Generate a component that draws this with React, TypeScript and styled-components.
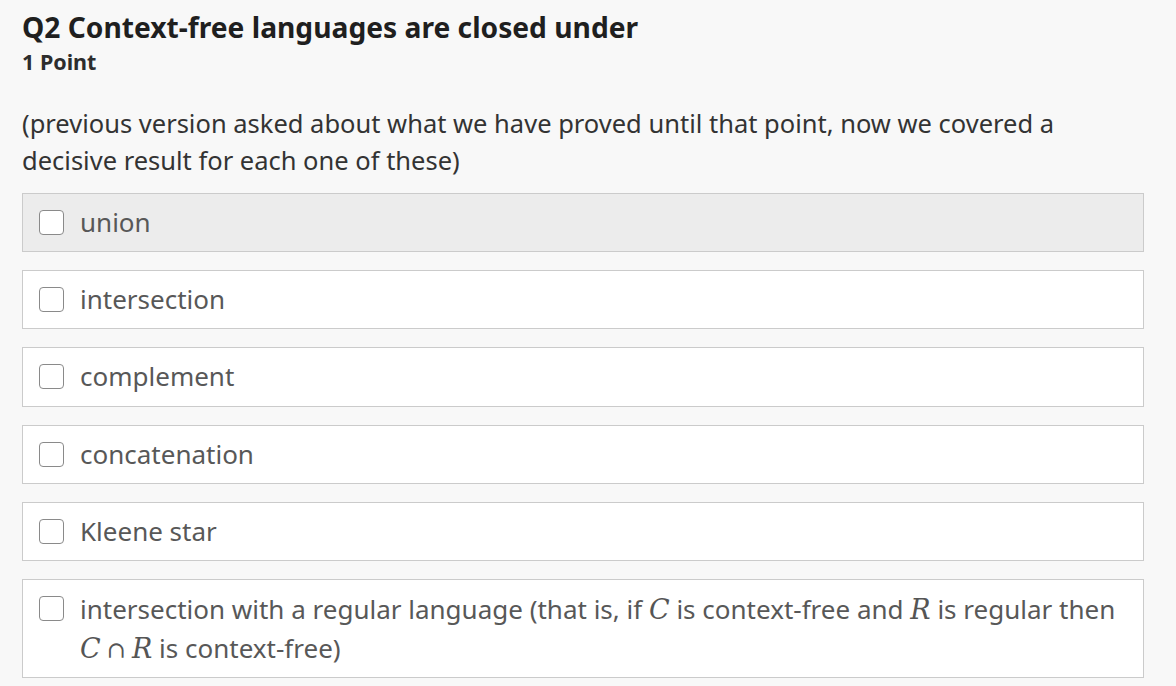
import React from "react";
import styled, { createGlobalStyle } from "styled-components";

const Global = createGlobalStyle`
  html, body { margin: 0; padding: 0; background: #f8f8f8; }
  body { font-family: "Noto Sans", "Open Sans", sans-serif; }
`;

const Page = styled.div`
  padding: 9px 32px 0 22px;
  display: flex;
  flex-direction: column;
`;

const Title = styled.h2`
  margin: 0;
  font-size: 28.2px;
  line-height: 36px;
  font-weight: 700;
  color: #1f1f1f;
`;

const Points = styled.div`
  margin-top: 4px;
  font-size: 21.5px;
  line-height: 26px;
  font-weight: 700;
  color: #2d2d2d;
`;

const Prompt = styled.p`
  margin: 30px 0 0;
  font-size: 25.5px;
  line-height: 37px;
  color: #333;
`;

const Options = styled.div`
  margin-top: 14px;
  display: flex;
  flex-direction: column;
  gap: 18px;
`;

const Option = styled.label<{ $hover?: boolean }>`
  display: flex;
  align-items: flex-start;
  gap: 16px;
  padding: 10px 16px;
  border: 1px solid #cbcbcb;
  background: ${(p) => (p.$hover ? "#ececec" : "#ffffff")};
`;

const Box = styled.span`
  flex: none;
  width: 23px;
  height: 23px;
  margin-top: 6px;
  border: 1px solid #8a8a8a;
  border-radius: 4px;
  background: #fff;
`;

const Label = styled.span<{ $tall?: boolean }>`
  font-size: 26px;
  line-height: ${(p) => (p.$tall ? "38.5px" : "37.2px")};
  color: #585858;
`;

const M = styled.span`
  font-family: "DejaVu Serif", "Liberation Serif", serif;
  font-style: italic;
  font-size: 27px;
  line-height: 1;
  color: #555;
`;

const Op = styled.span`
  font-family: "DejaVu Serif", "Liberation Serif", serif;
  font-size: 23px;
  line-height: 1;
  margin: 0 6px;
  color: #555;
`;

const items = ["intersection", "complement", "concatenation", "Kleene star"];

export default function App() {
  return (
    <>
      <Global />
      <Page>
        <Title>Q2 Context-free languages are closed under</Title>
        <Points>1 Point</Points>
        <Prompt>
          (previous version asked about what we have proved until that point, now we covered a
          decisive result for each one of these)
        </Prompt>
        <Options>
          <Option $hover>
            <Box />
            <Label>union</Label>
          </Option>
          {items.map((t) => (
            <Option key={t}>
              <Box />
              <Label>{t}</Label>
            </Option>
          ))}
          <Option>
            <Box />
            <Label $tall>
              intersection with a regular language (that is, if <M>C</M> is context-free and{" "}
              <M>R</M> is regular then <M>C</M>
              <Op>∩</Op>
              <M>R</M> is context-free)
            </Label>
          </Option>
        </Options>
      </Page>
    </>
  );
}
